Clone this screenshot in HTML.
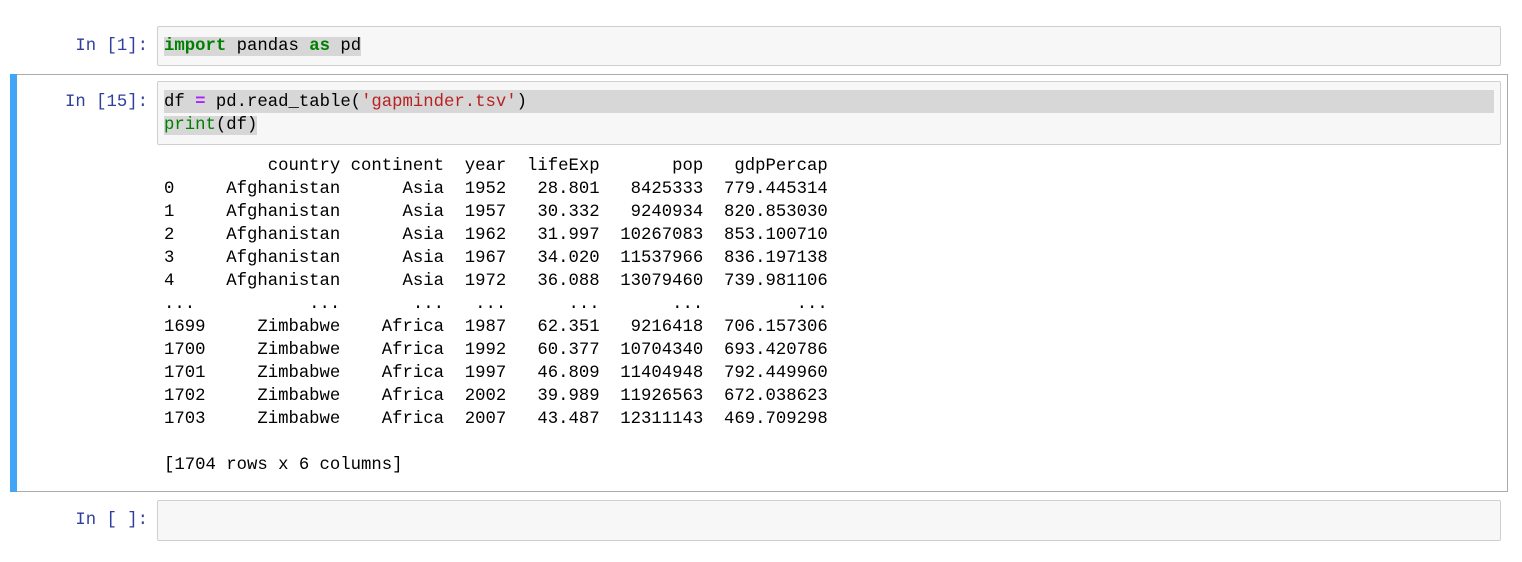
<!DOCTYPE html>
<html><head><style>
body{margin:0;width:1522px;height:562px;background:#fff;position:relative;overflow:hidden;font-family:"Liberation Mono",monospace;font-size:17.3px}
.box{position:absolute;left:157px;width:1342px;background:#f7f7f7;border:1px solid #cfcfcf;border-radius:2px}
.p{position:absolute;width:148px;text-align:right;color:#303F9F;left:0;line-height:23px}
.t{position:absolute;left:164px;line-height:23px;white-space:pre;color:#000}
.hl{background:#d7d7d7}
.k{color:#008000;font-weight:bold}
.o{color:#AA22FF;font-weight:bold}
.s{color:#BA2121}
.b{color:#008000}
pre{margin:0;font:inherit}
</style></head><body>
<div class="box" style="top:26px;height:38px"></div>
<div class="p" style="top:35px">In [1]:</div>
<div class="t" style="top:35px"><span class="hl"><span class="k">import</span> pandas <span class="k">as</span> pd</span></div>

<div style="position:absolute;left:10px;top:74px;width:1497px;height:416px;border:1px solid #ababab;border-left:none"></div>
<div style="position:absolute;left:10px;top:74px;width:7px;height:418px;background:#42a5f5"></div>
<div class="box" style="top:81px;height:62px"></div>
<div style="position:absolute;left:164px;top:90px;width:1330px;height:23px;background:#d7d7d7"></div>
<div class="p" style="top:91px">In [15]:</div>
<div class="t" style="top:91px">df <span class="o">=</span> pd.read_table(<span class="s">'gapminder.tsv'</span>)</div>
<div class="t" style="top:114px"><span class="hl"><span class="b">print</span>(df)</span></div>
<pre class="t" style="top:155px">          country continent  year  lifeExp       pop   gdpPercap
0     Afghanistan      Asia  1952   28.801   8425333  779.445314
1     Afghanistan      Asia  1957   30.332   9240934  820.853030
2     Afghanistan      Asia  1962   31.997  10267083  853.100710
3     Afghanistan      Asia  1967   34.020  11537966  836.197138
4     Afghanistan      Asia  1972   36.088  13079460  739.981106
...           ...       ...   ...      ...       ...         ...
1699     Zimbabwe    Africa  1987   62.351   9216418  706.157306
1700     Zimbabwe    Africa  1992   60.377  10704340  693.420786
1701     Zimbabwe    Africa  1997   46.809  11404948  792.449960
1702     Zimbabwe    Africa  2002   39.989  11926563  672.038623
1703     Zimbabwe    Africa  2007   43.487  12311143  469.709298

[1704 rows x 6 columns]</pre>

<div class="box" style="top:500px;height:39px"></div>
<div class="p" style="top:509px">In [ ]:</div>
</body></html>
